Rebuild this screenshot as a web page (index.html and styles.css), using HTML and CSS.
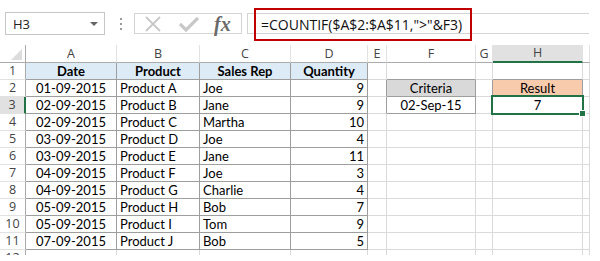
FILE: index.html
```html
<!DOCTYPE html>
<html lang="en">
<head>
  <meta charset="UTF-8" />
  <title>COUNTIF example</title>
  <link rel="stylesheet" href="styles.css">
</head>
<body>
  <div class="toolbar">
    <div class="name-box">
      <span>H3</span>
      <span class="caret"></span>
    </div>
    <div class="grip"><i></i><i></i><i></i></div>
    <div class="fx-buttons">
      <svg class="btn-x" width="18" height="16" viewBox="0 0 18 16">
        <path d="M2 1 L16 15 M16 1 L2 15" stroke="#c8c8c8" stroke-width="1.8" fill="none"/>
      </svg>
      <svg class="btn-ok" width="20" height="16" viewBox="0 0 20 16">
        <path d="M1 8 L7 14 L19 2" stroke="#c8c8c8" stroke-width="3.2" fill="none"/>
      </svg>
      <span class="fx">fx</span>
    </div>
    <div class="formula-bar">
      <span class="formula">=COUNTIF($A$2:$A$11,"&gt;"&amp;F3)</span>
    </div>
  </div>

  <div class="sheet">
    <table class="grid">
      <colgroup>
        <col class="c-rh"><col class="c-a"><col class="c-b"><col class="c-c"><col class="c-d">
        <col class="c-e"><col class="c-f"><col class="c-g"><col class="c-h"><col class="c-i">
      </colgroup>
      <tr class="col-heads">
        <th class="corner"><span class="tri"></span></th>
        <th>A</th><th>B</th><th>C</th><th>D</th><th>E</th><th>F</th><th>G</th><th class="sel-col">H</th><th></th>
      </tr>
      <tr>
        <td class="rh">1</td>
        <td class="tb hd">Date</td><td class="tb hd">Product</td><td class="tb hd">Sales Rep</td><td class="tb hd">Quantity</td>
        <td></td><td class="box-top"></td><td></td><td class="box-top"></td><td></td>
      </tr>
      <tr>
        <td class="rh">2</td>
        <td class="tb ctr">01-09-2015</td><td class="tb">Product A</td><td class="tb">Joe</td><td class="tb num">9</td>
        <td class="box-left"></td><td class="box crit-head">Criteria</td><td class="box-left"></td><td class="box res-head">Result</td><td></td>
      </tr>
      <tr>
        <td class="rh sel-row">3</td>
        <td class="tb ctr">02-09-2015</td><td class="tb">Product B</td><td class="tb">Jane</td><td class="tb num">9</td>
        <td class="box-left"></td><td class="box ctr">02-Sep-15</td><td class="box-left"></td><td class="box ctr active">7</td><td></td>
      </tr>
      <tr>
        <td class="rh">4</td>
        <td class="tb ctr">02-09-2015</td><td class="tb">Product C</td><td class="tb">Martha</td><td class="tb num">10</td>
        <td></td><td></td><td></td><td></td><td></td>
      </tr>
      <tr>
        <td class="rh">5</td>
        <td class="tb ctr">03-09-2015</td><td class="tb">Product D</td><td class="tb">Joe</td><td class="tb num">4</td>
        <td></td><td></td><td></td><td></td><td></td>
      </tr>
      <tr>
        <td class="rh">6</td>
        <td class="tb ctr">03-09-2015</td><td class="tb">Product E</td><td class="tb">Jane</td><td class="tb num">11</td>
        <td></td><td></td><td></td><td></td><td></td>
      </tr>
      <tr>
        <td class="rh">7</td>
        <td class="tb ctr">04-09-2015</td><td class="tb">Product F</td><td class="tb">Joe</td><td class="tb num">3</td>
        <td></td><td></td><td></td><td></td><td></td>
      </tr>
      <tr>
        <td class="rh">8</td>
        <td class="tb ctr">04-09-2015</td><td class="tb">Product G</td><td class="tb">Charlie</td><td class="tb num">4</td>
        <td></td><td></td><td></td><td></td><td></td>
      </tr>
      <tr>
        <td class="rh">9</td>
        <td class="tb ctr">05-09-2015</td><td class="tb">Product H</td><td class="tb">Bob</td><td class="tb num">7</td>
        <td></td><td></td><td></td><td></td><td></td>
      </tr>
      <tr>
        <td class="rh">10</td>
        <td class="tb ctr">05-09-2015</td><td class="tb">Product I</td><td class="tb">Tom</td><td class="tb num">9</td>
        <td></td><td></td><td></td><td></td><td></td>
      </tr>
      <tr>
        <td class="rh">11</td>
        <td class="tb ctr">07-09-2015</td><td class="tb">Product J</td><td class="tb">Bob</td><td class="tb num">5</td>
        <td></td><td></td><td></td><td></td><td></td>
      </tr>
      <tr>
        <td class="rh">12</td>
        <td></td><td></td><td></td><td></td><td></td><td></td><td></td><td></td><td></td>
      </tr>
    </table>
  </div>
</body>
</html>
```

FILE: styles.css
```css
body {
  margin: 0;
  padding: 0;
  background: #fff;
  width: 600px;
  height: 261px;
  overflow: hidden;
  font-family: 'Lato', sans-serif;
  color: #000;
}
.toolbar {
  height: 45px;
  display: flex;
  align-items: flex-start;
  font-family: 'Open Sans', sans-serif;
}
.name-box {
  margin: 12px 0 0 5px;
  width: 100px;
  height: 23px;
  box-sizing: border-box;
  border: 1px solid #c6c6c6;
  display: flex;
  align-items: center;
  justify-content: space-between;
  padding: 0 6px 0 7px;
  font-size: 13px;
  color: #222;
}
.caret {
  width: 0;
  height: 0;
  border-left: 4px solid transparent;
  border-right: 4px solid transparent;
  border-top: 4px solid #666;
}
.grip {
  margin: 18px 0 0 15px;
  display: flex;
  flex-direction: column;
  gap: 3px;
}
.grip i {
  display: block;
  width: 2px;
  height: 2px;
  background: #9a9a9a;
}
.fx-buttons {
  margin: 13px 0 0 12px;
  width: 108px;
  height: 21px;
  box-sizing: border-box;
  border: 1px solid #d4d4d4;
  display: flex;
  align-items: center;
  padding-left: 9px;
}
.btn-ok {
  margin-left: 17px;
}
.fx {
  margin-left: 15px;
  font-family: 'Liberation Serif', serif;
  font-style: italic;
  font-weight: bold;
  font-size: 20px;
  color: #6a6a6a;
  line-height: 18px;
}
.formula-bar {
  position: relative;
  margin: 13px 0 0 5px;
  width: 342px;
  height: 21px;
  box-sizing: border-box;
  border-top: 1px solid #d4d4d4;
  border-bottom: 1px solid #d4d4d4;
  border-left: 1px solid #d4d4d4;
}
.formula {
  position: absolute;
  left: 6px;
  top: -6px;
  width: 218px;
  height: 33px;
  box-sizing: border-box;
  border: 2px solid #c00000;
  padding-left: 5px;
  font-size: 14px;
  line-height: 29px;
  color: #111;
  white-space: nowrap;
}
.sheet {
  height: 210px;
  overflow: hidden;
}
.grid {
  border-collapse: separate;
  border-spacing: 0;
  table-layout: fixed;
  width: 590px;
  font-size: 13px;
}
.c-rh { width: 26px; }
.c-a { width: 91px; }
.c-b { width: 83px; }
.c-c { width: 91px; }
.c-d { width: 77px; }
.c-e { width: 19px; }
.c-f { width: 89px; }
.c-g { width: 17px; }
.c-h { width: 90px; }
.c-i { width: 7px; }
.grid th,
.grid td {
  height: 16px;
  padding: 0 3px;
  line-height: 16px;
  border-right: 1px solid #dadada;
  border-bottom: 1px solid #dadada;
  white-space: nowrap;
  overflow: hidden;
  text-align: left;
}
.col-heads th {
  font-family: 'Open Sans', sans-serif;
  font-weight: normal;
  font-size: 12.5px;
  color: #444;
  text-align: center;
  border-right-color: #e2e2e2;
  border-bottom-color: #ababab;
}
.corner {
  position: relative;
  border-right-color: #ababab !important;
}
.tri {
  position: absolute;
  right: 3px;
  bottom: 2px;
  width: 0;
  height: 0;
  border-left: 11px solid transparent;
  border-bottom: 11px solid #dcdcdc;
}
.grid .sel-col {
  background: #e1e1e1;
  border-bottom: 2px solid #217346;
  height: 15px;
}
.grid .rh {
  font-family: 'Open Sans', sans-serif;
  font-size: 12.5px;
  color: #444;
  text-align: center;
  padding: 0;
  border-right-color: #ababab;
  border-bottom-color: #e2e2e2;
}
.grid .sel-row {
  background: #e1e1e1;
  border-right: 2px solid #217346;
}
.grid .tb {
  border-right-color: #9e9e9e;
  border-bottom-color: #9e9e9e;
}
.grid .hd {
  background: #ddebf7;
  font-weight: bold;
  text-align: center;
}
.grid .ctr {
  text-align: center;
}
.grid .num {
  text-align: right;
}
.grid .box,
.grid .box-top {
  border-bottom-color: #9e9e9e;
}
.grid .box,
.grid .box-left {
  border-right-color: #9e9e9e;
}
.grid .crit-head {
  background: #d9d9d9;
  text-align: center;
}
.grid .res-head {
  background: #f8cbad;
  text-align: center;
}
.grid .active {
  position: relative;
  overflow: visible;
}
.active::after {
  content: "";
  position: absolute;
  left: -2px;
  top: -2px;
  right: -2px;
  bottom: -2px;
  border: 2px solid #217346;
}
.active::before {
  content: "";
  position: absolute;
  right: -4px;
  bottom: -4px;
  width: 5px;
  height: 5px;
  background: #217346;
  border: 1px solid #fff;
  z-index: 1;
}
```
